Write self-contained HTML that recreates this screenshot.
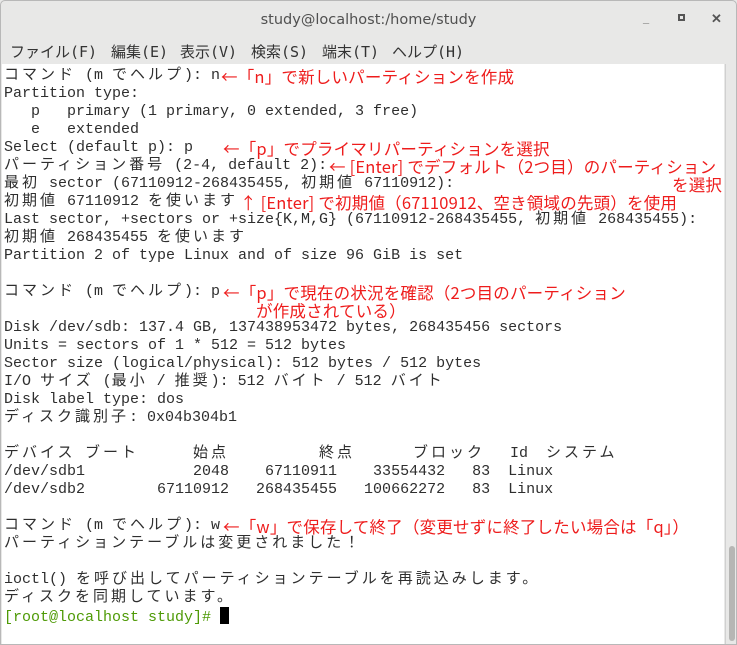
<!DOCTYPE html>
<html><head><meta charset="utf-8"><style>
*{margin:0;padding:0;box-sizing:border-box}
body{width:737px;height:645px;overflow:hidden;background:#e8e8e7;position:relative;font-family:"Liberation Sans","Noto Sans CJK JP",sans-serif}
#win{position:absolute;left:0;top:0;width:737px;height:645px;border:1px solid #b8b8b8;border-radius:5px 5px 0 0;overflow:hidden;background:#e8e8e7}
#title{position:absolute;top:0;left:0;right:0;height:37px;text-align:center;line-height:38px;font-size:14.5px;color:#505050;font-family:"DejaVu Sans","Liberation Sans",sans-serif}
.ctl{position:absolute;top:12px;font-size:11px;color:#555;font-weight:bold}
.m{position:absolute;top:38px;height:25px;font-size:15px;color:#333;line-height:26px;font-family:"DejaVu Sans Mono","Noto Sans CJK JP",sans-serif;white-space:pre}
#term{position:absolute;top:63px;left:1px;width:722px;height:580px;background:#fff}
.l{position:absolute;left:2px;height:18px;line-height:18px;font-family:"Liberation Mono","Noto Sans CJK JP",monospace;font-size:15px;color:#2e2e2e;white-space:pre}
.j{letter-spacing:3px}
.r{position:absolute;height:18px;line-height:18px;font-family:"Noto Sans CJK JP",sans-serif;font-size:16.5px;letter-spacing:0.2px;color:#ee1c1c;white-space:pre}
#sb{position:absolute;left:724px;top:63px;width:12px;height:580px;background:#e8e8e7;border-left:1px solid #d0d0d0}
#thumb{position:absolute;left:3px;top:482px;width:6px;height:95px;background:#b6b6b4;border-radius:3px}
.g{color:#4e9a06}
</style></head><body><div id="win">
<div id="title">study@localhost:/home/study</div>
<div class="ctl" style="left:642px">_</div>
<div class="ctl" style="left:677px;top:13px;width:7px;height:7px;border:2px solid #555"></div>
<div class="ctl" style="left:710px;top:10px;font-size:13px">✕</div>
<div class="m" style="left:9px">ファイル(F)</div>
<div class="m" style="left:110px">編集(E)</div>
<div class="m" style="left:179px">表示(V)</div>
<div class="m" style="left:250px">検索(S)</div>
<div class="m" style="left:321px">端末(T)</div>
<div class="m" style="left:391px">ヘルプ(H)</div>
<div id="term">
<div class="l" style="top:3px"><span class="j">コマンド</span> (m <span class="j">でヘルプ</span>): n</div>
<div class="r" style="left:219px;top:3px">←「n」で新しいパーティションを作成</div>
<div class="l" style="top:21px">Partition type:</div>
<div class="l" style="top:39px">   p   primary (1 primary, 0 extended, 3 free)</div>
<div class="l" style="top:57px">   e   extended</div>
<div class="l" style="top:75px">Select (default p): p</div>
<div class="r" style="left:221px;top:75px">←「p」でプライマリパーティションを選択</div>
<div class="l" style="top:93px"><span class="j">パーティション番号</span> (2-4, default 2):</div>
<div class="r" style="left:327px;top:93px">← [Enter] でデフォルト（2つ目）のパーティション</div>
<div class="l" style="top:111px"><span class="j">最初</span> sector (67110912-268435455, <span class="j">初期値</span> 67110912):</div>
<div class="r" style="left:670px;top:111px">を選択</div>
<div class="l" style="top:129px"><span class="j">初期値</span> 67110912 <span class="j">を使います</span></div>
<div class="r" style="left:238px;top:129px">↑ [Enter] で初期値（67110912、空き領域の先頭）を使用</div>
<div class="l" style="top:147px">Last sector, +sectors or +size{K,M,G} (67110912-268435455, <span class="j">初期値</span> 268435455):</div>
<div class="l" style="top:165px"><span class="j">初期値</span> 268435455 <span class="j">を使います</span></div>
<div class="l" style="top:183px">Partition 2 of type Linux and of size 96 GiB is set</div>
<div class="l" style="top:219px"><span class="j">コマンド</span> (m <span class="j">でヘルプ</span>): p</div>
<div class="r" style="left:221px;top:219px">←「p」で現在の状況を確認（2つ目のパーティション</div>
<div class="r" style="left:254px;top:237px">が作成されている）</div>
<div class="l" style="top:255px">Disk /dev/sdb: 137.4 GB, 137438953472 bytes, 268435456 sectors</div>
<div class="l" style="top:273px">Units = sectors of 1 * 512 = 512 bytes</div>
<div class="l" style="top:291px">Sector size (logical/physical): 512 bytes / 512 bytes</div>
<div class="l" style="top:309px">I/O <span class="j">サイズ</span> (<span class="j">最小</span> / <span class="j">推奨</span>): 512 <span class="j">バイト</span> / 512 <span class="j">バイト</span></div>
<div class="l" style="top:327px">Disk label type: dos</div>
<div class="l" style="top:345px"><span class="j">ディスク識別子</span>: 0x04b304b1</div>
<div class="l" style="top:381px"><span class="j">デバイス</span></div>
<div class="l" style="top:381px;left:83px"><span class="j">ブート</span></div>
<div class="l" style="top:381px;left:191px"><span class="j">始点</span></div>
<div class="l" style="top:381px;left:317px"><span class="j">終点</span></div>
<div class="l" style="top:381px;left:411px"><span class="j">ブロック</span></div>
<div class="l" style="top:381px;left:508px">Id</div>
<div class="l" style="top:381px;left:544px"><span class="j">システム</span></div>
<div class="l" style="top:399px">/dev/sdb1            2048    67110911    33554432   83  Linux</div>
<div class="l" style="top:417px">/dev/sdb2        67110912   268435455   100662272   83  Linux</div>
<div class="l" style="top:453px"><span class="j">コマンド</span> (m <span class="j">でヘルプ</span>): w</div>
<div class="r" style="left:221px;top:453px">←「w」で保存して終了（変更せずに終了したい場合は「q」）</div>
<div class="l" style="top:471px"><span class="j">パーティションテーブルは変更されました！</span></div>
<div class="l" style="top:507px">ioctl() <span class="j">を呼び出してパーティションテーブルを再読込みします。</span></div>
<div class="l" style="top:525px"><span class="j">ディスクを同期しています。</span></div>
<div class="l g" style="top:543px">[root@localhost study]# <span style="display:inline-block;width:9px;height:17px;background:#000;vertical-align:-3px"></span></div>
</div>
<div id="sb"><div id="thumb"></div></div>
</div></body></html>
